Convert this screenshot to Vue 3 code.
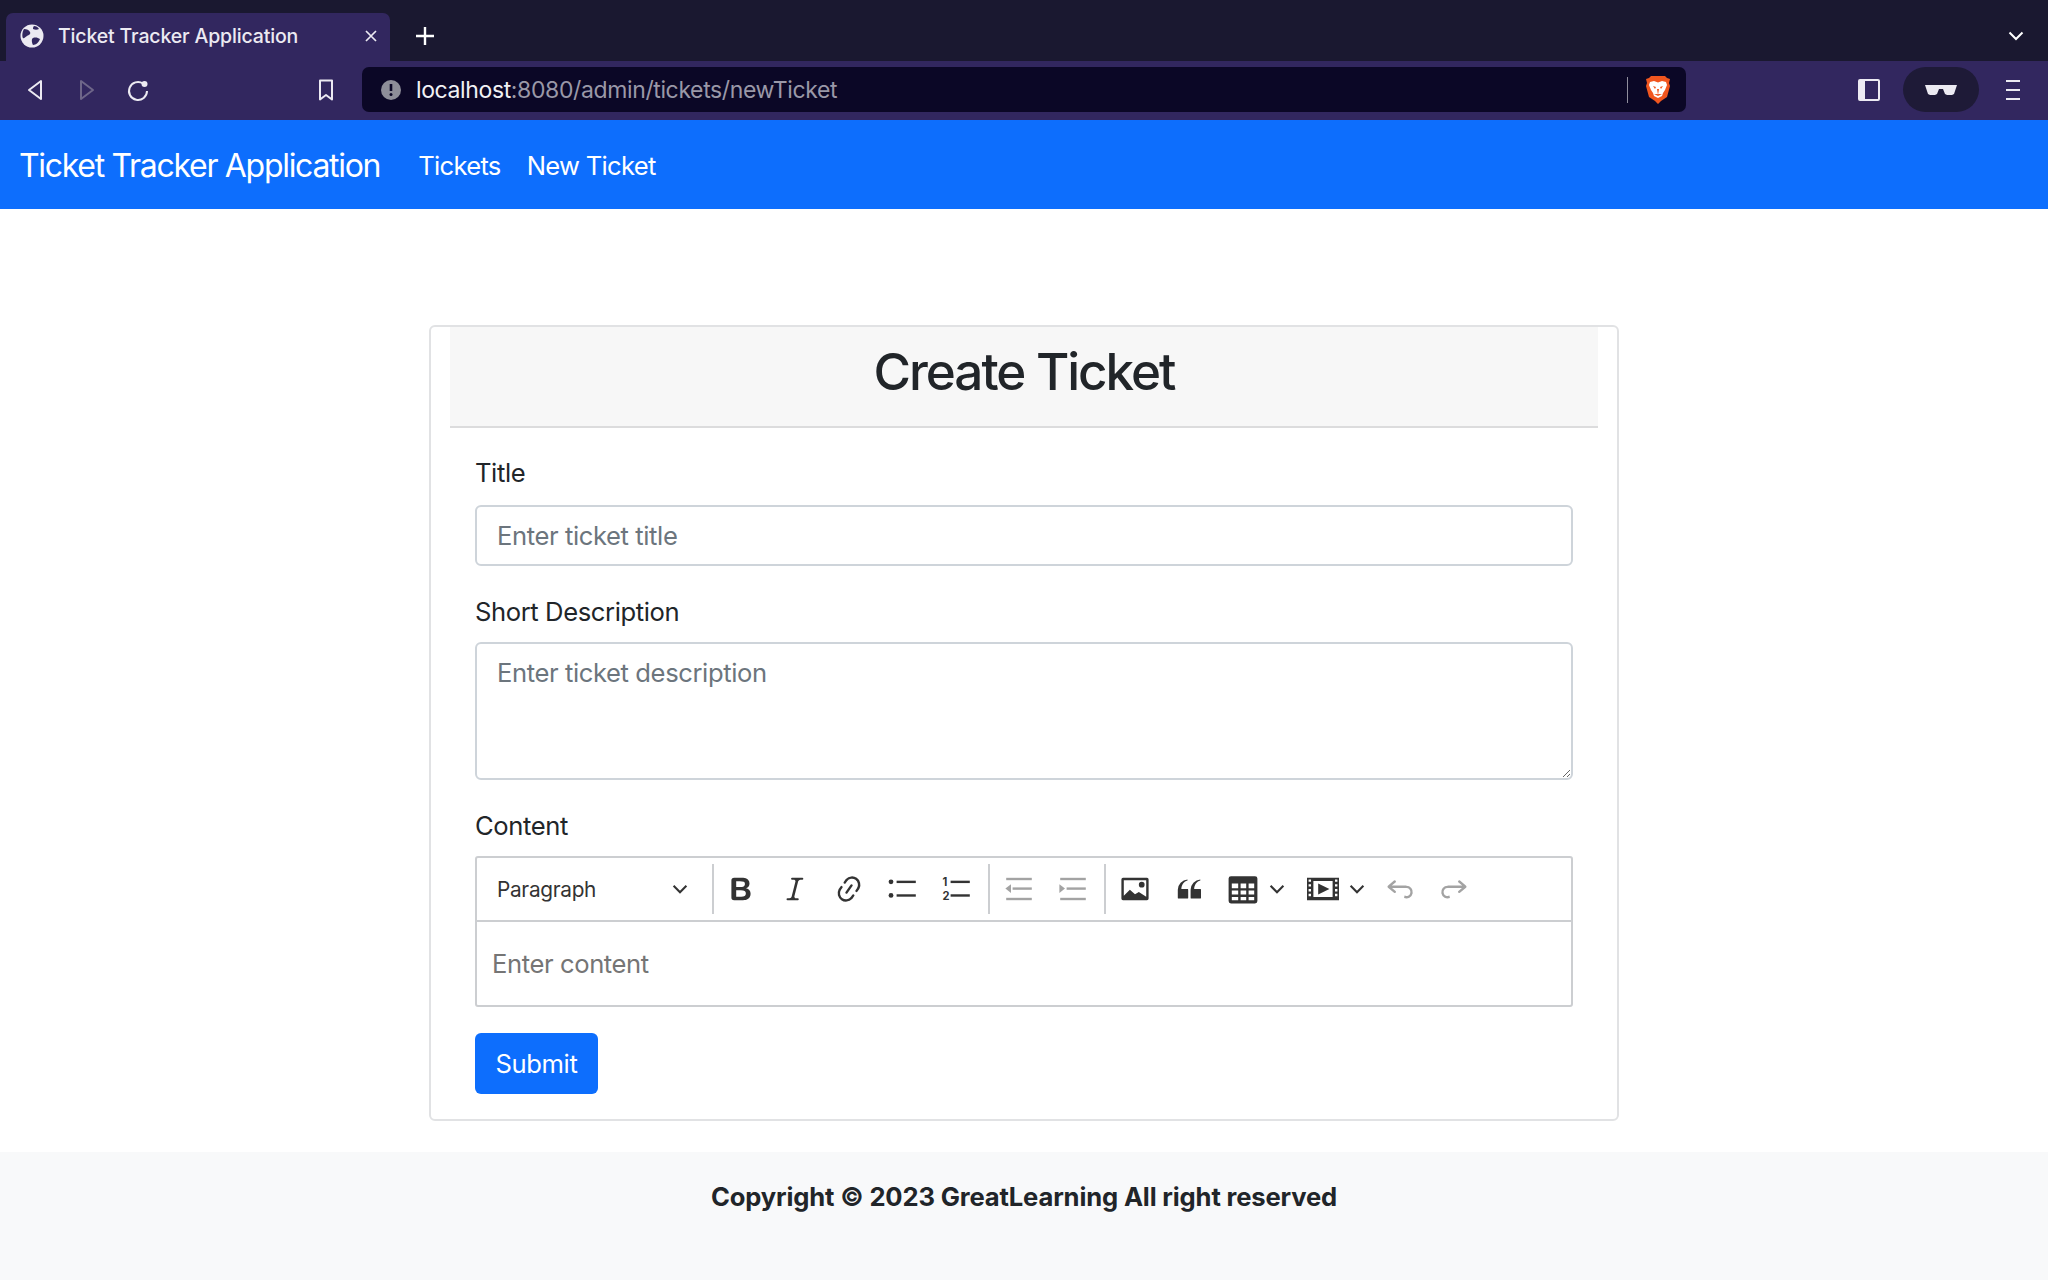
<script setup>
const navLinks = ['Tickets', 'New Ticket'];

const boldPath = 'M10.187 17H5.773c-.637 0-1.092-.138-1.364-.415-.273-.277-.409-.718-.409-1.323V4.738c0-.617.14-1.062.419-1.332.279-.27.73-.406 1.354-.406h4.68c.69 0 1.288.041 1.793.124.506.083.96.242 1.36.478.341.197.644.447.906.75a3.262 3.262 0 0 1 .808 2.162c0 1.401-.722 2.426-2.167 3.075C15.05 10.175 16 11.315 16 13.01a3.756 3.756 0 0 1-2.296 3.504 6.1 6.1 0 0 1-1.517.377c-.571.073-1.238.11-2 .11zm-.217-6.217H7v4.087h3.069c1.977 0 2.965-.69 2.965-2.072 0-.707-.256-1.22-.768-1.537-.512-.319-1.277-.478-2.296-.478zM7 5.13v3.619h2.606c.729 0 1.292-.067 1.69-.2a1.6 1.6 0 0 0 .91-.765c.165-.267.247-.566.247-.897 0-.707-.26-1.176-.778-1.409-.519-.232-1.31-.348-2.375-.348H7z';
const italicPath = 'm9.586 14.633.021.004c-.036.335.095.655.393.962.082.083.173.15.274.201h1.474a.6.6 0 1 1 0 1.2H5.304a.6.6 0 0 1 0-1.2h1.15c.474-.07.809-.182 1.005-.334.157-.122.291-.32.404-.597l2.416-9.55a1.053 1.053 0 0 0-.281-.823 1.12 1.12 0 0 0-.442-.296H8.15a.6.6 0 0 1 0-1.2h6.443a.6.6 0 1 1 0 1.2h-1.195c-.376.056-.65.155-.823.296-.215.175-.423.439-.623.79l-2.366 9.347z';
const linkPath = 'm11.077 15 .991-1.416a.75.75 0 1 1 1.229.86l-1.148 1.64a.748.748 0 0 1-.217.206 5.251 5.251 0 0 1-8.503-5.955.741.741 0 0 1 .12-.274l1.147-1.639a.75.75 0 1 1 1.228.86L4.933 10.7l.006.003a3.75 3.75 0 0 0 6.132 4.294l.006.004zm5.494-5.335a.748.748 0 0 1-.12.274l-1.147 1.639a.75.75 0 1 1-1.228-.86l.86-1.23a3.75 3.75 0 0 0-6.144-4.301l-.86 1.229a.75.75 0 0 1-1.229-.86l1.148-1.64a.748.748 0 0 1 .217-.206 5.251 5.251 0 0 1 8.503 5.955zm-4.563-2.532a.75.75 0 0 1 .184 1.045l-3.155 4.505a.75.75 0 1 1-1.229-.86l3.155-4.506a.75.75 0 0 1 1.045-.184z';
const quotePath = 'M3 10.423a6.5 6.5 0 0 1 6.056-6.408l.038.67C6.448 5.423 5.354 7.663 5.22 10H9c.552 0 .5.432.5.986v4.511c0 .554-.448.503-1 .503h-5c-.552 0-.5-.449-.5-1.003v-4.574zm8 0a6.5 6.5 0 0 1 6.056-6.408l.038.67c-2.646.739-3.74 2.979-3.873 5.315H17c.552 0 .5.432.5.986v4.511c0 .554-.448.503-1 .503h-5c-.552 0-.5-.449-.5-1.003v-4.574z';
const undoPath = 'm5.042 9.367 2.189 1.837a.75.75 0 0 1-.965 1.149l-3.788-3.18a.747.747 0 0 1-.21-.284.75.75 0 0 1 .17-.945L6.23 4.762a.75.75 0 1 1 .964 1.15L4.863 7.866h8.917A.75.75 0 0 1 14 7.9a4 4 0 1 1-1.477 7.718l.344-1.489a2.5 2.5 0 1 0 1.094-4.73l.008-.032H5.042z';
const redoPath = 'm14.958 9.367-2.189 1.837a.75.75 0 0 0 .965 1.149l3.788-3.18a.747.747 0 0 0 .21-.284.75.75 0 0 0-.17-.945L13.77 4.762a.75.75 0 1 0-.964 1.15l2.331 1.955H6.22A.75.75 0 0 0 6 7.9a4 4 0 1 0 1.477 7.718l-.344-1.489A2.5 2.5 0 1 1 6.039 9.4l-.008-.032h8.927z';
</script>

<template>
  <div class="page">
    <div class="tabstrip">
      <div class="tab">
        <svg class="favicon" viewBox="0 0 24 24">
          <circle cx="12" cy="12" r="11.500" fill="#eceaf2" />
          <path d="M4 5c3 0 5 1 6 3s-1 3-3 4-3 3-4 2-1-6 1-9zM13 14c3-1 5 0 7 1-1 3-4 6-7 6-1-2-2-6 0-7zM14 2c2 0 4 1 5 3-2 1-4 1-6 0 0-1 0-2 1-3z" fill="#32275f" />
        </svg>
        <span class="tab-title">Ticket Tracker Application</span>
        <svg class="tab-close" viewBox="0 0 14 14"><path d="M2 2l10 10M12 2L2 12" stroke="#eceaf2" stroke-width="1.7" fill="none" /></svg>
      </div>
      <svg class="new-tab" viewBox="0 0 20 20"><path d="M10 1v18M1 10h18" stroke="#fff" stroke-width="2.4" fill="none" /></svg>
      <svg class="tab-list" viewBox="0 0 16 10"><path d="M1.5 1.5L8 8l6.5-6.5" stroke="#fff" stroke-width="2" fill="none" /></svg>
    </div>

    <div class="toolbar">
      <svg class="tb-icon back" viewBox="0 0 18 24"><path d="M15 3v18L3 12z" stroke="#eceaf2" stroke-width="2" stroke-linejoin="round" fill="none" /></svg>
      <svg class="tb-icon forward" viewBox="0 0 18 24"><path d="M3 3v18l12-9z" stroke="#6e6689" stroke-width="2" stroke-linejoin="round" fill="none" /></svg>
      <svg class="tb-icon reload" viewBox="0 0 24 24">
        <path d="M17 5.5A9 9 0 1 0 21 13" stroke="#eceaf2" stroke-width="2" fill="none" />
        <circle cx="18.500" cy="6" r="3" fill="#eceaf2" />
      </svg>
      <svg class="tb-icon bookmark" viewBox="0 0 18 24"><path d="M3 2.500h12v19l-6-4.500-6 4.500z" stroke="#eceaf2" stroke-width="2" stroke-linejoin="round" fill="none" /></svg>
      <div class="urlbar">
        <svg class="info" viewBox="0 0 20 20">
          <circle cx="10" cy="10" r="10" fill="#8e8e99" />
          <path d="M10 4v7" stroke="#0b0726" stroke-width="2.600" />
          <circle cx="10" cy="14.500" r="1.500" fill="#0b0726" />
        </svg>
        <div class="url"><span class="url-host">localhost</span><span class="url-rest">:8080/admin/tickets/newTicket</span></div>
        <span class="url-sep"></span>
        <svg class="brave" viewBox="0 0 26 30">
          <path d="M6 1h14l2 2 3 1-1 4 1 3-3 11-6 4-3 3-3-3-6-4L1 11l1-3-1-4 3-1z" fill="#f1561f" />
          <path d="M5 7l4-1 4 1.500L17 6l4 1 1 3-2 5-2 3-1 3-4 2-4-2-1-3-2-3-2-5z" fill="#fff" />
          <path d="M8 11l3 1-1 2zM18 11l-3 1 1 2zM12 14l1 6 1-6zM9 19h8l-4 2z" fill="#f1561f" />
        </svg>
      </div>
      <svg class="tb-icon sidebar" viewBox="0 0 22 22">
        <rect x="1" y="1" width="20" height="20" rx="1" stroke="#eceaf2" stroke-width="2" fill="none" />
        <rect x="1" y="1" width="6" height="20" fill="#eceaf2" />
      </svg>
      <div class="glasses-pill">
        <svg class="glasses" viewBox="0 0 32 12"><path d="M0 1h32l-1 3-2 6-2 1h-5l-2-1-2-5h-4l-2 5-2 1H5l-2-1-2-6z" fill="#eceaf2" /></svg>
      </div>
      <svg class="tb-icon menu" viewBox="0 0 16 22"><path d="M1 2h14M1 11h14M1 20h14" stroke="#eceaf2" stroke-width="2" /></svg>
    </div>

    <nav class="navbar">
      <a class="brand">Ticket Tracker Application</a>
      <a v-for="link in navLinks" :key="link" class="nav-link">{{ link }}</a>
    </nav>

    <main class="main">
      <div class="card">
        <div class="card-header"><h2>Create Ticket</h2></div>
        <form class="card-body" @submit.prevent>
          <div class="group first">
            <label>Title</label>
            <input class="control" type="text" placeholder="Enter ticket title" />
          </div>
          <div class="group second">
            <label>Short Description</label>
            <textarea class="control area" placeholder="Enter ticket description"></textarea>
          </div>
          <div class="group third">
            <label>Content</label>
            <div class="editor">
              <div class="ed-toolbar">
                <div class="ed-dropdown">
                  <span>Paragraph</span>
                  <svg class="chev" viewBox="0 0 10 10"><path d="M1 3l4 4 4-4" /></svg>
                </div>
                <span class="ed-sep"></span>
                <button type="button" class="ed-btn"><svg viewBox="0 0 20 20"><path :d="boldPath" /></svg></button>
                <button type="button" class="ed-btn"><svg viewBox="0 0 20 20"><path :d="italicPath" /></svg></button>
                <button type="button" class="ed-btn"><svg viewBox="0 0 20 20"><path :d="linkPath" /></svg></button>
                <button type="button" class="ed-btn">
                  <svg viewBox="0 0 20 20">
                    <circle cx="2.500" cy="5.500" r="1.500" /><circle cx="2.500" cy="14" r="1.500" />
                    <rect x="6" y="4.800" width="12" height="1.500" /><rect x="6" y="13.300" width="12" height="1.500" />
                  </svg>
                </button>
                <button type="button" class="ed-btn">
                  <svg viewBox="0 0 20 20">
                    <text x="1" y="8" class="ol-num">1</text><text x="1" y="17" class="ol-num">2</text>
                    <rect x="6" y="4.800" width="12" height="1.500" /><rect x="6" y="13.300" width="12" height="1.500" />
                  </svg>
                </button>
                <span class="ed-sep narrow"></span>
                <button type="button" class="ed-btn muted">
                  <svg viewBox="0 0 20 20">
                    <rect x="2" y="3" width="16" height="1.500" /><rect x="6" y="9" width="12" height="1.500" /><rect x="2" y="15.500" width="16" height="1.500" />
                    <path d="M5 7v5.500L1.500 9.750z" />
                  </svg>
                </button>
                <button type="button" class="ed-btn muted">
                  <svg viewBox="0 0 20 20">
                    <rect x="2" y="3" width="16" height="1.500" /><rect x="6" y="9" width="12" height="1.500" /><rect x="2" y="15.500" width="16" height="1.500" />
                    <path d="M1.500 7v5.500L5 9.750z" />
                  </svg>
                </button>
                <span class="ed-sep narrow"></span>
                <button type="button" class="ed-btn">
                  <svg viewBox="0 0 20 20">
                    <path fill-rule="evenodd" d="M2.500 3h15a1 1 0 0 1 1 1v12a1 1 0 0 1-1 1h-15a1 1 0 0 1-1-1V4a1 1 0 0 1 1-1zm.5 1.500v9.700l3.800-3.700 3.200 2.800 2.400-1.500 4.600 3V4.500z" />
                    <circle cx="14.200" cy="7.300" r="1.800" />
                  </svg>
                </button>
                <button type="button" class="ed-btn"><svg viewBox="0 0 20 20"><path :d="quotePath" /></svg></button>
                <button type="button" class="ed-btn split">
                  <svg viewBox="0 0 20 20">
                    <path fill-rule="evenodd" d="M2.500 2h15A1.500 1.500 0 0 1 19 3.500v14a1.500 1.500 0 0 1-1.500 1.500h-15A1.500 1.500 0 0 1 1 17.500v-14A1.500 1.500 0 0 1 2.500 2zm.5 4.500V9.500h4v-3zm5.500 0V9.500h3.500v-3zm5 0V9.500h3.500v-3zM3 11v2.500h4V11zm5.500 0v2.500h3.500V11zm5 0v2.500h3.500V11zM3 15v2h4v-2zm5.500 0v2h3.500v-2zm5 0v2h3.500v-2z" />
                  </svg>
                  <svg class="chev" viewBox="0 0 10 10"><path d="M1 3l4 4 4-4" /></svg>
                </button>
                <button type="button" class="ed-btn split">
                  <svg viewBox="0 0 20 20">
                    <path fill-rule="evenodd" d="M0 3h20v14H0zm1 1v1.500h1.500V4zm0 3v1.500h1.500V7zm0 3v1.500h1.500V10zm0 3v1.500h1.500V13zm16.500-9v1.500H19V4zm0 3v1.500H19V7zm0 3v1.500H19V10zm0 3v1.500H19V13zM4 5v10h12V5z" />
                    <path d="M7 6.500l7 3.500-7 3.500z" />
                  </svg>
                  <svg class="chev" viewBox="0 0 10 10"><path d="M1 3l4 4 4-4" /></svg>
                </button>
                <button type="button" class="ed-btn muted undo"><svg viewBox="0 0 20 20"><path :d="undoPath" /></svg></button>
                <button type="button" class="ed-btn muted"><svg viewBox="0 0 20 20"><path :d="redoPath" /></svg></button>
              </div>
              <div class="ed-body">Enter content</div>
            </div>
          </div>
          <button type="submit" class="submit">Submit</button>
        </form>
      </div>
    </main>

    <footer class="footer">Copyright © 2023 GreatLearning All right reserved</footer>
  </div>
</template>

<style>
body {
  margin: 0;
  background: #fff;
}
</style>

<style scoped>
.page {
  display: flex;
  flex-direction: column;
  height: 1280px;
  font-family: Inter, "Liberation Sans", sans-serif;
  color: #212529;
  overflow: hidden;
}

.tabstrip {
  display: flex;
  align-items: flex-end;
  height: 61px;
  flex: none;
  padding-left: 6px;
  padding-right: 24px;
  background: #1a1830;
  box-sizing: border-box;
}

.tab {
  display: flex;
  align-items: center;
  width: 384px;
  height: 48px;
  padding: 0 12px 2px 14px;
  box-sizing: border-box;
  border-radius: 7px 7px 0 0;
  background: #32275f;
  color: #eceaf2;
  font-size: 19.500px;
  font-weight: 500;
  letter-spacing: -0.15px;
}

.favicon {
  width: 24px;
  height: 24px;
  margin-right: 14px;
}

.tab-title {
  flex: 1;
  white-space: nowrap;
}

.tab-close {
  width: 14px;
  height: 14px;
}

.new-tab {
  width: 20px;
  height: 20px;
  margin: 0 0 15px 25px;
}

.tab-list {
  width: 16px;
  height: 10px;
  margin: 0 0 20px auto;
}

.toolbar {
  display: flex;
  align-items: center;
  height: 59px;
  flex: none;
  padding: 0 27px 2px 26px;
  box-sizing: border-box;
  background: #32275f;
}

.tb-icon {
  flex: none;
}

.back {
  width: 18px;
  height: 24px;
}

.forward {
  width: 18px;
  height: 24px;
  margin-left: 34px;
}

.reload {
  width: 24px;
  height: 24px;
  margin-left: 30px;
}

.bookmark {
  width: 18px;
  height: 24px;
  margin-left: 167px;
}

.urlbar {
  display: flex;
  align-items: center;
  width: 1324px;
  height: 45px;
  margin-left: 27px;
  padding: 0 15px 0 19px;
  box-sizing: border-box;
  border-radius: 7px;
  background: #0b0726;
  font-size: 23px;
  letter-spacing: -0.38px;
}

.info {
  width: 20px;
  height: 20px;
  margin-right: 15px;
}

.url {
  flex: 1;
  white-space: nowrap;
}

.url-host {
  color: #f1f1f4;
}

.url-rest {
  color: #9a98a8;
}

.url-sep {
  width: 1px;
  height: 26px;
  margin-right: 17px;
  background: #8f8d9c;
}

.brave {
  width: 26px;
  height: 30px;
}

.sidebar {
  width: 22px;
  height: 22px;
  margin-left: 172px;
}

.glasses-pill {
  display: flex;
  align-items: center;
  justify-content: center;
  width: 76px;
  height: 45px;
  margin-left: 23px;
  border-radius: 23px;
  background: #1e1a37;
}

.glasses {
  width: 32px;
  height: 12px;
}

.menu {
  width: 16px;
  height: 22px;
  margin-left: auto;
}

.navbar {
  display: flex;
  align-items: center;
  height: 89px;
  flex: none;
  padding: 2px 0 0 19px;
  box-sizing: border-box;
  background: #0d6efd;
  color: #fff;
}

.brand {
  margin-right: 38px;
  font-size: 32px;
  letter-spacing: -1.3px;
}

.nav-link {
  margin-right: 26px;
  font-size: 25.600px;
  letter-spacing: -0.7px;
}

.main {
  flex: 1;
  padding: 116px 429px 0;
}

.card {
  padding: 0 19px;
  border: 2px solid #e1e2e4;
  border-radius: 6px;
  background: #fff;
}

.card-header {
  height: 100.500px;
  display: flex;
  align-items: center;
  justify-content: center;
  padding-bottom: 10px;
  box-sizing: border-box;
  border-bottom: 2px solid #dcdcdd;
  background: #f7f7f7;
}

h2 {
  margin: 0;
  font-size: 51.200px;
  font-weight: 500;
  letter-spacing: -2.050px;
}

.card-body {
  padding: 26.600px 25px 25.600px;
}

.group.first {
  margin-bottom: 27.200px;
}

.group.second {
  margin-bottom: 27.200px;
}

.group.third {
  margin-bottom: 25.600px;
}

label {
  display: block;
  font-size: 25.600px;
  line-height: 38.400px;
  letter-spacing: -0.4px;
}

.first label {
  margin-bottom: 12.800px;
}

.second label {
  margin-bottom: 10.200px;
}

.third label {
  margin-bottom: 10.500px;
}

.control {
  display: block;
  width: 100%;
  height: 61px;
  padding: 0 20px;
  box-sizing: border-box;
  border: 2px solid #ced4da;
  border-radius: 6px;
  font-family: inherit;
  font-size: 25.600px;
  letter-spacing: -0.4px;
  color: #212529;
  outline: none;
}

.control::placeholder {
  color: #6c757d;
  opacity: 1;
}

.area {
  height: 138px;
  padding: 9.500px 20px;
  line-height: 38.400px;
}

.editor {
  border: 2px solid #ccced1;
  border-radius: 3px;
}

.ed-toolbar {
  display: flex;
  align-items: center;
  height: 62px;
  border-bottom: 2px solid #ccced1;
}

.ed-dropdown {
  display: flex;
  align-items: center;
  justify-content: space-between;
  width: 211px;
  padding: 0 0 0 20px;
  box-sizing: border-box;
  font-size: 20.800px;
  letter-spacing: -0.3px;
  color: #333;
}

.ed-sep {
  width: 2px;
  height: 50px;
  margin-left: 24px;
  background: #ccced1;
  flex: none;
}

.ed-sep.narrow {
  margin: 0 2px 0 4px;
}

.ed-btn {
  display: flex;
  align-items: center;
  justify-content: center;
  width: 54px;
  height: 50px;
  padding: 0;
  border: 0;
  background: none;
  flex: none;
}

.ed-btn svg {
  width: 32px;
  height: 32px;
  fill: #333;
}

.ed-btn.muted svg {
  fill: #a3a3a3;
}

.ed-btn.split {
  width: 80px;
  justify-content: flex-start;
  gap: 10px;
  padding-left: 11px;
}

.ed-btn.undo {
  margin-left: -3px;
}

.ed-btn svg.chev,
.ed-dropdown .chev {
  width: 16px;
  height: 16px;
  fill: none;
  stroke: #333;
  stroke-width: 1.300;
}

.ol-num {
  font-family: Inter, "Liberation Sans", sans-serif;
  font-size: 7px;
  font-weight: 700;
}

.ed-body {
  display: flex;
  align-items: center;
  height: 83px;
  padding: 0 15px;
  font-size: 25.600px;
  letter-spacing: -0.4px;
  color: #757575;
}

.submit {
  display: block;
  width: 123px;
  height: 61px;
  padding: 0;
  border: 0;
  border-radius: 6px;
  background: #0d6efd;
  color: #fff;
  font-family: inherit;
  font-size: 25.600px;
  letter-spacing: -0.4px;
}

.footer {
  flex: none;
  height: 128px;
  padding-top: 26px;
  box-sizing: border-box;
  background: #f8f9fa;
  text-align: center;
  font-size: 25.600px;
  line-height: 38.400px;
  font-weight: 700;
  letter-spacing: -0.15px;
}
</style>
